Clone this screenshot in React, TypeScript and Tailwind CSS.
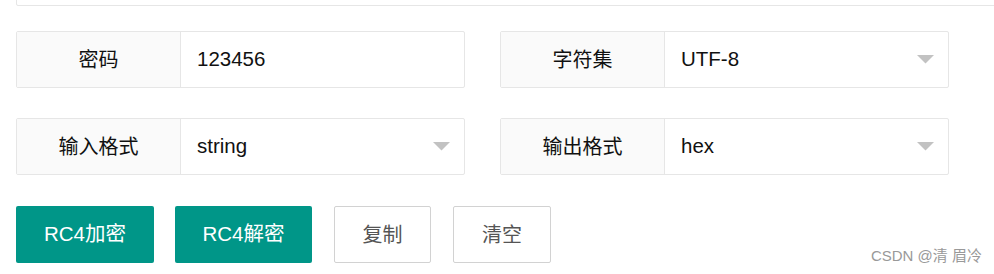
import { useState } from 'react'

const font = 'font-["Liberation_Sans","Noto_Sans_CJK_SC",sans-serif]'

function Arrow() {
  return (
    <svg width="17" height="9" viewBox="0 0 17 9" className="shrink-0">
      <path d="M0 0 L17 0 L8.5 8.5 Z" fill="#c2c2c2" />
    </svg>
  )
}

function Field({ label, value, select }: { label: string; value: string; select?: boolean }) {
  return (
    <div className="flex h-[57px] w-[449px] rounded-[2px] border border-[#e6e6e6] bg-white">
      <div className="flex w-[164px] shrink-0 items-center justify-center border-r border-[#e6e6e6] bg-[#fafafa] text-[20px] text-[#111]">
        {label}
      </div>
      <div className="flex flex-1 items-center justify-between pl-[16px] pr-[14px] text-[20.5px] text-[#111]">
        <span>{value}</span>
        {select && <Arrow />}
      </div>
    </div>
  )
}

export default function App() {
  const [pwd] = useState('123456')

  return (
    <div className={`relative h-[274px] w-[994px] overflow-hidden bg-white ${font}`}>
      <div className="ml-[16px] mt-[-40px] h-[46px] w-[1000px] rounded-[2px] border border-[#e6e6e6]" />

      <div className="flex flex-col gap-[30px] pl-[16px] pt-[25px]">
        <div className="flex gap-[35px]">
          <Field label="密码" value={pwd} />
          <Field label="字符集" value="UTF-8" select />
        </div>
        <div className="flex gap-[35px]">
          <Field label="输入格式" value="string" select />
          <Field label="输出格式" value="hex" select />
        </div>
        <div className="mt-[1px] flex gap-[22px]">
          <button className="h-[57px] w-[138px] rounded-[2px] bg-[#009688] text-[20.5px] text-white">RC4加密</button>
          <button className="-ml-[1px] h-[57px] w-[137px] rounded-[2px] bg-[#009688] text-[20.5px] text-white">RC4解密</button>
          <button className="h-[57px] w-[97px] rounded-[2px] border border-[#d2d2d2] bg-white text-[20px] text-[#555]">复制</button>
          <button className="h-[57px] w-[98px] rounded-[2px] border border-[#d2d2d2] bg-white text-[20px] text-[#555]">清空</button>
        </div>
      </div>

      <div className="absolute bottom-[11px] right-[12px] text-[15px] leading-none text-[#999]">CSDN @清 眉冷</div>
    </div>
  )
}
